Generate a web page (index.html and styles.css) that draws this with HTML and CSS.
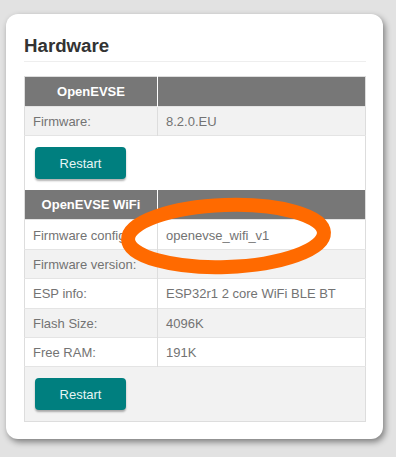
FILE: index.html
```html
<!DOCTYPE html>
<html lang="en">
<head>
  <meta charset="UTF-8">
  <meta name="viewport" content="width=device-width, initial-scale=1.0">
  <title>Hardware</title>
  <link rel="stylesheet" href="styles.css">
</head>
<body>
  <div class="card">
    <h3>Hardware</h3>
    <table class="info">
      <tr class="head">
        <th>OpenEVSE</th>
        <th></th>
      </tr>
      <tr>
        <td class="label">Firmware:</td>
        <td>8.2.0.EU</td>
      </tr>
      <tr class="action">
        <td colspan="2"><button>Restart</button></td>
      </tr>
      <tr class="head">
        <th>OpenEVSE WiFi</th>
        <th></th>
      </tr>
      <tr>
        <td class="label">Firmware config:</td>
        <td>openevse_wifi_v1</td>
      </tr>
      <tr>
        <td class="label">Firmware version:</td>
        <td>4.1.4</td>
      </tr>
      <tr>
        <td class="label">ESP info:</td>
        <td>ESP32r1 2 core WiFi BLE BT</td>
      </tr>
      <tr>
        <td class="label">Flash Size:</td>
        <td>4096K</td>
      </tr>
      <tr>
        <td class="label">Free RAM:</td>
        <td>191K</td>
      </tr>
      <tr class="action">
        <td colspan="2"><button>Restart</button></td>
      </tr>
    </table>
  </div>

  <!-- annotation drawn over the screenshot -->
  <svg class="mark" width="220" height="84" viewBox="0 0 220 84">
    <ellipse cx="110" cy="42" rx="98" ry="31" fill="none" stroke="#ff6a00" stroke-width="14" transform="rotate(-2 110 42)"/>
  </svg>
</body>
</html>
```

FILE: styles.css
```css
body {
  font-family: "Liberation Sans", Arial, sans-serif;
  background-color: #e2e2e2;
  margin: 0;
  padding: 14px 13px 0 6px;
  position: relative;
  height: 457px;
  box-sizing: border-box;
  overflow: hidden;
}

.card {
  background-color: #fff;
  border-radius: 12px;
  box-shadow: 2px 3px 6px rgba(0, 0, 0, 0.45);
  padding: 18px 17px 17px 18px;
}

h3 {
  margin: 0 0 14px;
  padding: 3px 0 4px;
  font-size: 18.7px;
  color: #333;
  border-bottom: 1px solid #eee;
}

.info {
  width: 100%;
  border-collapse: collapse;
  border: 1px solid #ddd;
  font-size: 13px;
}

.info th,
.info td {
  height: 15.4px;
  line-height: 15px;
  padding: 7px 8px 6px;
  text-align: left;
  color: #737373;
  border-top: 1px solid #e4e4e4;
}

.info td.label {
  width: 116px;
  border-right: 1px solid #ddd;
}

.info tr:nth-child(even) td {
  background-color: #f2f2f2;
}

.info tr.head th {
  height: 15px;
  background-color: #777;
  color: #fff;
  font-weight: bold;
  text-align: center;
  border-top: none;
  padding-top: 7px;
  padding-bottom: 7px;
}

.info tr.head th:first-child {
  border-right: 1px solid #fff;
}

.info tr.action td {
  height: 32px;
  padding: 11px 10px;
}

button {
  font-family: inherit;
  font-size: 13px;
  background-color: #007f7f;
  color: #e6f5f5;
  width: 91px;
  height: 32px;
  border: none;
  border-radius: 4px;
  box-shadow: 0 2px 2px rgba(0, 0, 0, 0.3);
  cursor: pointer;
  display: block;
}

.mark {
  position: absolute;
  left: 116px;
  top: 194px;
}
```
